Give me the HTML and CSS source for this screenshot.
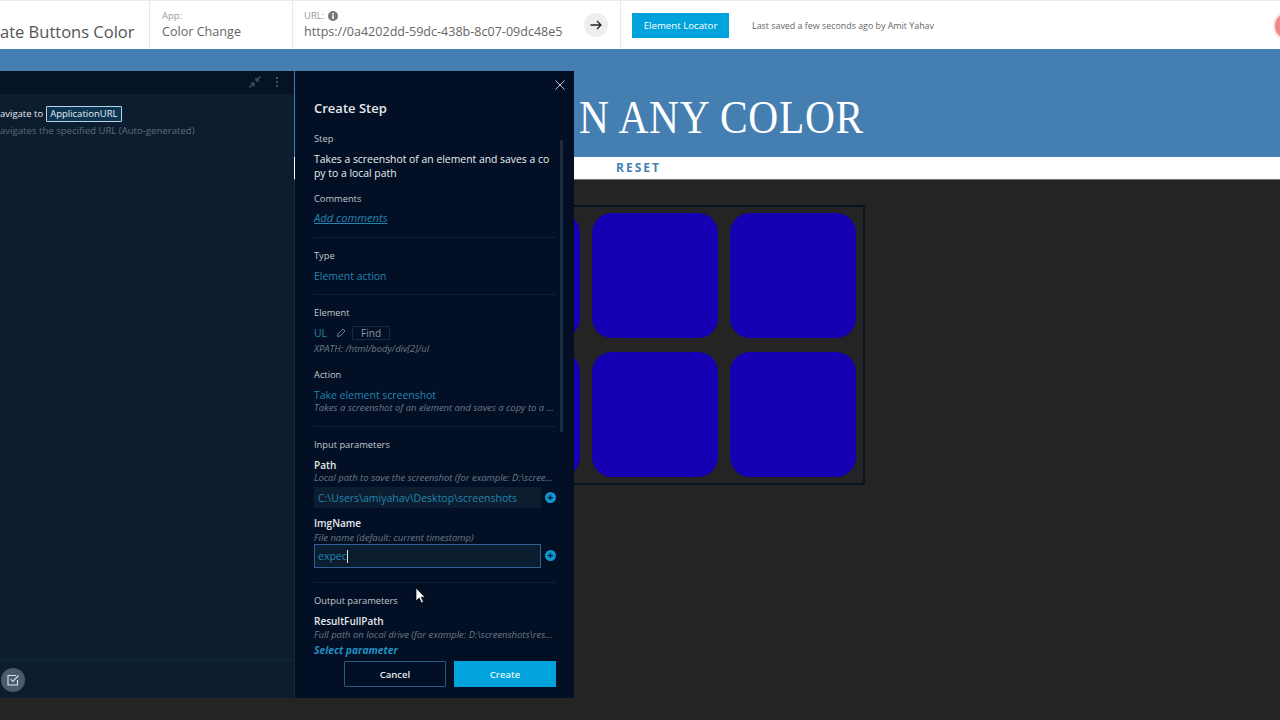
FILE: index.html
```html
<!DOCTYPE html>
<html lang="en">
<head>
<meta charset="utf-8">
<title>Create Step</title>
<link rel="stylesheet" href="styles.css">
</head>
<body>
<header class="topbar">
  <div class="tb-sec tb-title">ate Buttons Color</div>
  <div class="tb-sec tb-app">
    <div class="tb-label">App:</div>
    <div class="tb-value">Color Change</div>
  </div>
  <div class="tb-sec tb-url">
    <div class="url-col">
      <div class="tb-label">URL: <svg class="info" viewBox="0 0 10 10" width="10" height="10"><circle cx="5" cy="5" r="5" fill="#777"/><rect x="4.2" y="4.2" width="1.6" height="3.6" fill="#fff"/><rect x="4.2" y="2" width="1.6" height="1.5" fill="#fff"/></svg></div>
      <div class="tb-value url-text">https://0a4202dd-59dc-438b-8c07-09dc48e5</div>
    </div>
    <div class="go"><svg viewBox="0 0 14 14" width="14" height="14"><path d="M1.5 7H12M8 3l4 4-4 4" fill="none" stroke="#222" stroke-width="1.3"/></svg></div>
  </div>
  <div class="tb-actions">
    <button class="locator">Element Locator</button>
    <span class="saved">Last saved a few seconds ago by Amit Yahav</span>
  </div>
  <div class="avatar"></div>
</header>

<main class="page">
  <div class="hero"><span class="hero-text">N ANY COLOR</span></div>
  <nav class="nav"><span class="reset">RESET</span></nav>
  <div class="stage">
    <ul class="tiles">
      <li class="tile"></li><li class="tile"></li><li class="tile"></li>
      <li class="tile"></li><li class="tile"></li><li class="tile"></li>
    </ul>
  </div>

  <div class="overlay">
    <section class="steps">
      <div class="steps-head">
        <svg viewBox="0 0 14 14" width="14" height="14"><path d="M1.5 12.5L6 8M6 8v3.5M6 8H2.5M12.5 1.5L8 6M8 6V2.5M8 6h3.5" fill="none" stroke="#46556a" stroke-width="1.2"/></svg>
        <span class="dots"><i></i><i></i><i></i></span>
      </div>
      <div class="steps-body">
        <div class="step-line">avigate to <span class="chip">ApplicationURL</span></div>
        <div class="step-desc">avigates the specified URL (Auto-generated)</div>
      </div>
      <div class="steps-foot">
        <span class="foot-btn"><svg viewBox="0 0 14 14" width="14" height="14"><path d="M11.5 7v5H2V2.500h8" fill="none" stroke="#dfe4ea" stroke-width="1.1"/><path d="M4.500 6l2.300 2.500L12.500 2.500" fill="none" stroke="#dfe4ea" stroke-width="1.1"/></svg></span>
      </div>
    </section>

    <section class="form">
      <svg class="close" viewBox="0 0 10 10" width="10" height="10"><path d="M0.500 0.500l9 9M9.500 0.500l-9 9" stroke="#c6ccd4" stroke-width="1"/></svg>
      <div class="scroll-thumb"></div>
      <h1 class="form-title">Create Step</h1>

      <div class="lbl m13">Step</div>
      <div class="step-text m7">Takes a screenshot of an element and saves a co<br>py to a local path</div>
      <div class="lbl m11">Comments</div>
      <a class="add m6">Add comments</a>
      <hr class="rule m12">

      <div class="lbl m10">Type</div>
      <div class="val m7">Element action</div>
      <hr class="rule m11">

      <div class="lbl m10">Element</div>
      <div class="el-row m7">
        <span class="val">UL</span>
        <svg class="pencil" viewBox="0 0 10 10" width="10" height="10"><path d="M1.500 8.500l.5-2.500L7 1l2 2-5 5z" fill="none" stroke="#7c8794" stroke-width="0.900"/></svg>
        <span class="find">Find</span>
      </div>
      <div class="hint m1 xpath">XPATH: /html/body/div[2]/ul</div>

      <div class="lbl m12">Action</div>
      <div class="val m7">Take element screenshot</div>
      <div class="hint">Takes a screenshot of an element and saves a copy to a ...</div>
      <hr class="rule m12">

      <div class="lbl m10">Input parameters</div>
      <div class="param m7">Path</div>
      <div class="hint">Local path to save the screenshot (for example: D:\scree...</div>
      <div class="input-row m3">
        <div class="input path-input">C:\Users\amiyahav\Desktop\screenshots</div>
        <span class="plus">+</span>
      </div>
      <div class="param m8">ImgName</div>
      <div class="hint m2">File name (default: current timestamp)</div>
      <div class="input-row">
        <div class="input img-input">expec<span class="caret"></span></div>
        <span class="plus">+</span>
      </div>
      <hr class="rule m14">

      <div class="lbl m10">Output parameters</div>
      <div class="param m7">ResultFullPath</div>
      <div class="hint m1">Full path on local drive (for example: D:\screenshots\res...</div>
      <div class="select m2">Select parameter</div>

      <div class="form-actions">
        <button class="btn cancel">Cancel</button>
        <button class="btn create">Create</button>
      </div>
    </section>
  </div>

  <svg class="cursor" viewBox="0 0 12 18" width="12" height="18"><path d="M1 1v13l3.200-3 2.300 5 2-1-2.300-4.800H10z" fill="#fff" stroke="#000" stroke-width="0.700"/></svg>
</main>
</body>
</html>
```
FILE: styles.css
```css
* { box-sizing: border-box; }
html, body { margin: 0; padding: 0; }
body {
  width: 1280px;
  height: 720px;
  overflow: hidden;
  background: #242424;
  font-family: "Open Sans", "Liberation Sans", sans-serif;
  display: flex;
  flex-direction: column;
}

/* top bar */
.topbar {
  height: 49px;
  flex: none;
  background: #fff;
  border-top: 1px solid #e8ecf0;
  display: flex;
  align-items: stretch;
  position: relative;
  overflow: hidden;
}
.tb-sec { border-right: 1px solid #e4e9ee; }
.tb-title {
  width: 150px;
  font-size: 16.500px;
  line-height: 62px;
  height: 48px;
  color: #555;
  white-space: nowrap;
}
.tb-app { width: 143px; padding: 8px 0 0 12px; }
.tb-url { width: 328px; padding: 8px 0 0 11px; display: flex; }
.tb-label { font-size: 9.500px; line-height: 13px; color: #999; display: flex; align-items: center; gap: 4px; }
.tb-value { font-size: 12.600px; line-height: 18px; color: #666; margin-top: 1px; white-space: nowrap; }
.url-col { width: 260px; }
.url-text { font-size: 12.550px; }
.go {
  width: 24px;
  height: 24px;
  border-radius: 50%;
  background: #eeeeee;
  margin: 4px 0 0 20px;
  display: flex;
  align-items: center;
  justify-content: center;
}
.tb-actions { display: flex; align-items: center; padding-left: 11px; padding-bottom: 0; }
.locator {
  width: 97px;
  height: 25px;
  border: 0;
  padding: 0;
  background: #00a3dc;
  color: #fff;
  font-family: inherit;
  font-size: 9.700px;
}
.saved { margin-left: 23px; font-size: 8.900px; color: #666; }
.avatar {
  position: absolute;
  left: 1275px;
  top: 12px;
  width: 26px;
  height: 26px;
  border-radius: 50%;
  background: #f08a8a;
  box-shadow: 0 0 3px 1px #f6c4c4;
}

/* page behind */
.page { flex: 1; position: relative; }
.hero {
  height: 108px;
  background: #457fb1;
  color: #fff;
  font-family: "Liberation Serif", serif;
  font-size: 47px;
  line-height: 136px;
  letter-spacing: 0.800px;
  padding-left: 579px;
  white-space: nowrap;
}
.hero-text { display: inline-block; transform: scaleX(0.882); transform-origin: left center; }
.nav { height: 23px; background: #fff; border-bottom: 1px solid #777; padding-left: 616px; }
.reset { font-size: 12px; font-weight: 700; letter-spacing: 2px; line-height: 21px; color: #457fb1; display: block; }
.stage { padding: 25px 0 0 446px; }
.tiles {
  width: 419px;
  height: 280px;
  margin: 0;
  padding: 6px;
  list-style: none;
  border: 2px solid #061428;
  display: grid;
  grid-template-columns: repeat(3, 126px);
  grid-template-rows: repeat(2, 125px);
  gap: 14px 12px;
}
.tile { background: #1500b3; border-radius: 20px; }

/* overlay panels */
.overlay {
  position: absolute;
  left: 0;
  top: 22px;
  width: 574px;
  height: 627px;
  display: flex;
  gap: 1px;
}
.steps {
  width: 294px;
  background: #0c1d30;
  display: flex;
  flex-direction: column;
}
.steps-head {
  height: 23px;
  background: #061325;
  display: flex;
  align-items: center;
  justify-content: flex-end;
  gap: 14px;
  padding: 0 16px 2px 0;
}
.dots { display: flex; flex-direction: column; gap: 2px; }
.dots i { width: 2px; height: 2px; border-radius: 50%; background: #5b6878; display: block; }
.steps-body { flex: 1; padding-top: 12px; }
.step-line { font-size: 9.500px; line-height: 16px; color: #e4e8ec; }
.chip {
  display: inline-block;
  height: 16px;
  padding: 0 3.500px;
  line-height: 14px;
  border: 1px solid #b5d3e4;
  background: #0c3550;
  border-radius: 1px;
  color: #e6eef4;
}
.step-desc { font-size: 9.600px; line-height: 14px; color: #5d6b7a; margin-top: 2px; }
.steps-foot {
  height: 38px;
  border-top: 1px solid #14263a;
  padding: 7px 0 0 1px;
}
.foot-btn {
  width: 24px;
  height: 24px;
  border-radius: 50%;
  background: #4b5a6c;
  display: flex;
  align-items: center;
  justify-content: center;
}

/* create step form */
.form {
  width: 279px;
  background: #020f24;
  padding: 27px 18px 0 19px;
  position: relative;
  display: flex;
  flex-direction: column;
}
.close { position: absolute; left: 260px; top: 9px; }
.scroll-thumb {
  position: absolute;
  left: 265px;
  top: 69px;
  width: 3px;
  height: 292px;
  background: #1d2d42;
  border-radius: 2px;
}
.form-title { margin: 0; font-size: 13px; line-height: 20px; font-weight: 600; color: #e6e9ed; }
.lbl { height: 14px; font-size: 9.300px; line-height: 16px; color: #c3c8ce; }
.step-text { font-size: 10.400px; line-height: 14px; font-weight: 500; color: #eceff2; white-space: nowrap; }
.add { font-size: 11.200px; line-height: 14px; font-style: italic; text-decoration: underline; color: #2285b0; display: block; }
.val { font-size: 10.450px; line-height: 14px; color: #2285b0; }
.rule { width: 100%; height: 0; margin-bottom: 0; margin-left: 0; margin-right: 0; border: 0; border-top: 1px solid #0f2034; flex: none; }
.el-row { display: flex; align-items: center; height: 14px; }
.pencil { margin-left: 9px; }
.find {
  margin-left: 6px;
  width: 38px;
  height: 14px;
  border: 1px solid #18293e;
  border-radius: 1px;
  color: #8d97a3;
  font-size: 10px;
  line-height: 12px;
  text-align: center;
}
.hint { font-size: 9.450px; line-height: 12px; font-style: italic; color: #6f7a86; white-space: nowrap; }
.xpath { height: 14px; line-height: 16px; }
.param { font-size: 10px; line-height: 14px; font-weight: 600; color: #e4e8ec; }
.input-row { display: flex; align-items: center; }
.input {
  width: 227px;
  font-size: 10.500px;
  color: #2285b0;
  padding-left: 4px;
  background: #0c1d30;
  white-space: nowrap;
  display: flex;
  align-items: center;
}
.path-input { height: 21px; }
.img-input { height: 24px; border: 1px solid #2f6294; padding-left: 3px; }
.caret { width: 1px; height: 13px; background: #e4e8ec; }
.plus {
  width: 11px;
  height: 11px;
  margin: -1px 0 0 4px;
  border-radius: 50%;
  background: #0f97cf;
  color: #04182c;
  font-size: 11px;
  font-weight: 700;
  line-height: 10px;
  text-align: center;
}
.select { font-size: 10.300px; line-height: 14px; font-style: italic; font-weight: 700; color: #2290c0; }
.form-actions { margin-top: 4px; display: flex; justify-content: flex-end; gap: 8px; }
.btn {
  width: 102px;
  height: 26px;
  padding: 0;
  font-family: inherit;
  font-size: 9.500px;
  font-weight: 600;
}
.cancel { background: transparent; border: 1px solid #2b5b82; border-radius: 1px; color: #e6e9ed; }
.create { background: #00a3dc; border: 0; color: #e6f7fd; }

.m1 { margin-top: 1px; }
.m2 { margin-top: 2px; }
.m3 { margin-top: 3px; }
.m6 { margin-top: 6px; }
.m7 { margin-top: 7px; }
.m8 { margin-top: 8px; }
.m10 { margin-top: 10px; }
.m11 { margin-top: 11px; }
.m12 { margin-top: 12px; }
.m13 { margin-top: 13px; }
.m14 { margin-top: 14px; }

.cursor { position: absolute; left: 415px; top: 538px; }
```
